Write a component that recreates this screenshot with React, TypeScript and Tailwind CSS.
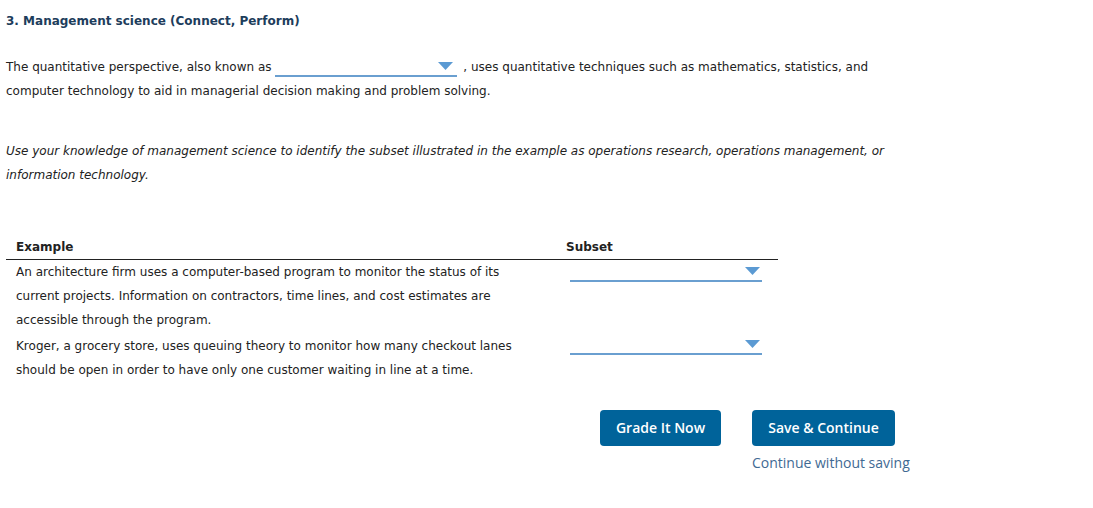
import React from 'react';

const body = { fontFamily: '"DejaVu Sans", Verdana, sans-serif' };
const btn = { fontFamily: '"Open Sans", sans-serif' };

function Arrow() {
  return (
    <svg width="15" height="8" viewBox="0 0 15 8" className="block">
      <path d="M0 0h15L7.5 8z" fill="#5b9ad3" />
    </svg>
  );
}

function Dropdown({ className }: { className: string }) {
  return (
    <div className={`flex justify-end border-b-2 border-[#6a9fd0] ${className}`}>
      <Arrow />
    </div>
  );
}

const rows = [
  {
    lines: [
      'An architecture firm uses a computer-based program to monitor the status of its',
      'current projects. Information on contractors, time lines, and cost estimates are',
      'accessible through the program.',
    ],
  },
  {
    lines: [
      'Kroger, a grocery store, uses queuing theory to monitor how many checkout lanes',
      'should be open in order to have only one customer waiting in line at a time.',
    ],
  },
];

export default function App() {
  return (
    <div className="w-[1093px] h-[508px] bg-white text-[#222] text-[12px] leading-[24px]" style={body}>
      <div className="px-[6px] pt-[10px]">
        <h1 className="font-bold text-[12px] leading-[22px] text-[#1d3d5c]">
          3. Management science (Connect, Perform)
        </h1>

        <p className="mt-[23px]">
          The quantitative perspective, also known as{' '}
          <span className="inline-flex align-baseline">
            <Dropdown className="w-[182px] h-[18px] items-end pr-[4px] pb-[5px] -translate-y-[1px]" />
          </span>
          <span className="ml-[6px]">, uses quantitative techniques such as mathematics, statistics, and</span>
          <br />
          computer technology to aid in managerial decision making and problem solving.
        </p>

        <p className="mt-[36px] italic">
          Use your knowledge of management science to identify the subset illustrated in the example as operations research, operations management, or
          <br />
          information technology.
        </p>

        <div className="mt-[48px] w-[772px]">
          <div className="flex border-b border-[#222] font-bold">
            <div className="w-[560px] pl-[10px]">Example</div>
            <div>Subset</div>
          </div>
          {rows.map((r, i) => (
            <div key={i} className="flex pb-[2px]">
              <div className="w-[564px] pl-[10px]">
                {r.lines.map((l) => (
                  <div key={l}>{l}</div>
                ))}
              </div>
              <div className={i === 0 ? 'pt-[4px]' : 'pt-[3px]'}>
                <Dropdown className="w-[192px] h-[18px] items-center pr-[2px] pb-[3px]" />
              </div>
            </div>
          ))}
        </div>

        <div className="mt-[26px] flex justify-start pl-[594px] gap-[31px]" style={btn}>
          <button className="h-[36px] w-[121px] rounded-[4px] bg-[#00639a] text-white text-[14px] font-semibold">
            Grade It Now
          </button>
          <div className="flex flex-col items-start">
            <button className="h-[36px] w-[143px] rounded-[4px] bg-[#00639a] text-white text-[14px] font-semibold">
              Save &amp; Continue
            </button>
            <span className="mt-[7px] text-[14px] leading-[20px] text-[#3f6a93]">Continue without saving</span>
          </div>
        </div>
      </div>
    </div>
  );
}
